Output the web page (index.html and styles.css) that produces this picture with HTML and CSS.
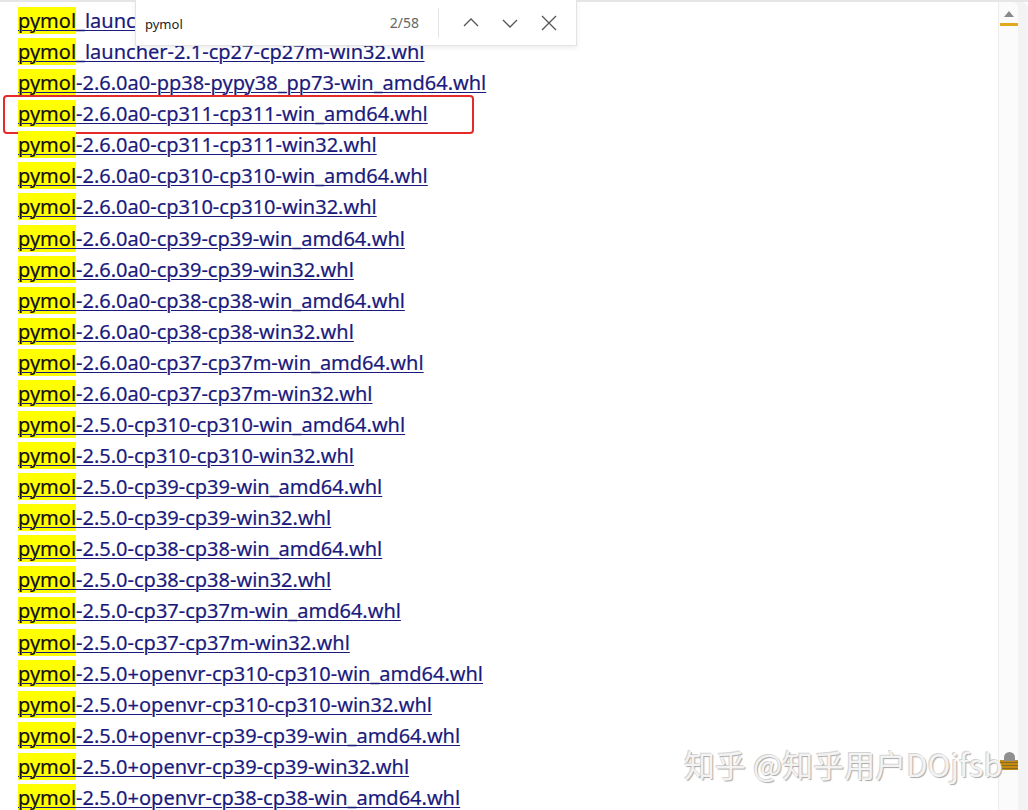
FILE: index.html
```html
<!DOCTYPE html>
<html>
<head>
<meta charset="utf-8">
<link rel="stylesheet" href="styles.css">
</head>
<body>
<div class="topline"></div>
<div class="page">
  <ul class="list">
    <li><a href="#"><mark>pymol</mark>_launcher-2.1-cp27-cp27m-win_amd64.whl</a></li>
    <li><a href="#"><mark>pymol</mark>_launcher-2.1-cp27-cp27m-win32.whl</a></li>
    <li><a href="#"><mark>pymol</mark>-2.6.0a0-pp38-pypy38_pp73-win_amd64.whl</a></li>
    <li class="boxed"><a href="#"><mark>pymol</mark>-2.6.0a0-cp311-cp311-win_amd64.whl</a></li>
    <li><a href="#"><mark>pymol</mark>-2.6.0a0-cp311-cp311-win32.whl</a></li>
    <li><a href="#"><mark>pymol</mark>-2.6.0a0-cp310-cp310-win_amd64.whl</a></li>
    <li><a href="#"><mark>pymol</mark>-2.6.0a0-cp310-cp310-win32.whl</a></li>
    <li><a href="#"><mark>pymol</mark>-2.6.0a0-cp39-cp39-win_amd64.whl</a></li>
    <li><a href="#"><mark>pymol</mark>-2.6.0a0-cp39-cp39-win32.whl</a></li>
    <li><a href="#"><mark>pymol</mark>-2.6.0a0-cp38-cp38-win_amd64.whl</a></li>
    <li><a href="#"><mark>pymol</mark>-2.6.0a0-cp38-cp38-win32.whl</a></li>
    <li><a href="#"><mark>pymol</mark>-2.6.0a0-cp37-cp37m-win_amd64.whl</a></li>
    <li><a href="#"><mark>pymol</mark>-2.6.0a0-cp37-cp37m-win32.whl</a></li>
    <li><a href="#"><mark>pymol</mark>-2.5.0-cp310-cp310-win_amd64.whl</a></li>
    <li><a href="#"><mark>pymol</mark>-2.5.0-cp310-cp310-win32.whl</a></li>
    <li><a href="#"><mark>pymol</mark>-2.5.0-cp39-cp39-win_amd64.whl</a></li>
    <li><a href="#"><mark>pymol</mark>-2.5.0-cp39-cp39-win32.whl</a></li>
    <li><a href="#"><mark>pymol</mark>-2.5.0-cp38-cp38-win_amd64.whl</a></li>
    <li><a href="#"><mark>pymol</mark>-2.5.0-cp38-cp38-win32.whl</a></li>
    <li><a href="#"><mark>pymol</mark>-2.5.0-cp37-cp37m-win_amd64.whl</a></li>
    <li><a href="#"><mark>pymol</mark>-2.5.0-cp37-cp37m-win32.whl</a></li>
    <li><a href="#"><mark>pymol</mark>-2.5.0+openvr-cp310-cp310-win_amd64.whl</a></li>
    <li><a href="#"><mark>pymol</mark>-2.5.0+openvr-cp310-cp310-win32.whl</a></li>
    <li><a href="#"><mark>pymol</mark>-2.5.0+openvr-cp39-cp39-win_amd64.whl</a></li>
    <li><a href="#"><mark>pymol</mark>-2.5.0+openvr-cp39-cp39-win32.whl</a></li>
    <li><a href="#"><mark>pymol</mark>-2.5.0+openvr-cp38-cp38-win_amd64.whl</a></li>
  </ul>
  <div class="scrollbar">
    <svg class="arrow" width="12" height="8" viewBox="0 0 12 8"><path d="M6 1 L11 7 L1 7 Z" fill="#8a8a8a"/></svg>
    <div class="mark-top"></div>
    <div class="mark-bottom"></div>
    <div class="thumb"></div>
  </div>
</div>

<div class="findbar">
  <span class="query">pymol</span>
  <span class="count">2/58</span>
  <span class="sep"></span>
  <svg class="btn" width="20" height="20" viewBox="0 0 20 20"><path d="M3 13 L10 6 L17 13" fill="none" stroke="#555" stroke-width="1.3"/></svg>
  <svg class="btn" width="20" height="20" viewBox="0 0 20 20"><path d="M3 7 L10 14 L17 7" fill="none" stroke="#555" stroke-width="1.3"/></svg>
  <svg class="btn" width="20" height="20" viewBox="0 0 20 20"><path d="M3 3 L17 17 M17 3 L3 17" fill="none" stroke="#555" stroke-width="1.3"/></svg>
</div>

<div class="watermark">知乎 @知乎用户DOjfsb</div>
</body>
</html>
```

FILE: styles.css
```css
html, body {
  margin: 0;
  padding: 0;
  background: #ffffff;
  overflow: hidden;
  height: 810px;
}
body {
  font-family: "Noto Sans", "Noto Sans CJK SC", sans-serif;
  position: relative;
}
.topline {
  height: 2px;
  background: #e6e6e6;
}
.page {
  display: flex;
  height: 808px;
}
.list {
  list-style: none;
  margin: 0;
  padding: 6px 0 0 18px;
  flex: 1;
}
.list li {
  height: 31.08px;
  font-size: 20px;
  line-height: 26px;
  position: relative;
}
.list a {
  color: #1a1a7c;
  text-decoration: underline;
  text-underline-offset: 2px;
  text-decoration-thickness: 1px;
  white-space: nowrap;
  -webkit-text-stroke: 0.2px #1a1a7c;
}
.list mark {
  background: #ffff00;
  color: #111;
  padding: 0;
  -webkit-text-stroke: 0.2px #111;
}
.list li.boxed::before {
  content: "";
  position: absolute;
  left: -15px;
  top: -6px;
  width: 467px;
  height: 35px;
  border: 2px solid #e52a2a;
  border-radius: 4px;
}
.scrollbar {
  width: 19px;
  margin-right: 10px;
  background: #fbfbfb;
  border-left: 1px solid #ececec;
  border-top-right-radius: 6px;
  position: relative;
  box-shadow: 10px 0 0 #f3f3f3;
}
.scrollbar .arrow {
  position: absolute;
  left: 4px;
  top: 8px;
}
.mark-top {
  position: absolute;
  left: 1px;
  right: 0;
  top: 21px;
  height: 3px;
  background: #e2a81e;
}
.mark-bottom {
  position: absolute;
  left: 1px;
  right: 0;
  top: 758px;
  height: 10px;
  background: repeating-linear-gradient(#c58a10 0 2px, #8a6a20 2px 3px);
}
.thumb {
  position: absolute;
  left: 5px;
  top: 750px;
  width: 11px;
  height: 9px;
  border-radius: 6px 6px 0 0;
  background: #8f8f8f;
}
.findbar {
  position: absolute;
  left: 135px;
  top: 0;
  width: 442px;
  height: 46px;
  background: #fff;
  border: 1px solid #e3e3e3;
  border-top: none;
  box-shadow: 0 2px 5px rgba(0,0,0,0.08);
  display: flex;
  align-items: center;
  box-sizing: border-box;
  padding: 0 17px 0 9px;
  font-family: "Noto Sans", sans-serif;
  font-size: 13px;
  color: #222;
}
.findbar .query {
  flex: 1;
  padding-top: 2px;
}
.findbar .count {
  color: #666;
  font-size: 14px;
  margin-right: 19px;
}
.findbar .sep {
  width: 1px;
  height: 30px;
  background: #e5e5e5;
  margin-right: 22px;
}
.findbar .btn {
  margin-left: 19px;
}
.findbar .sep + .btn {
  margin-left: 0;
}
.watermark {
  position: absolute;
  left: 684px;
  top: 741px;
  font-family: "Noto Sans CJK SC", sans-serif;
  font-size: 31px;
  color: #f3f3f3;
  letter-spacing: 0px;
  text-shadow: 1px 1px 1px #a8a8a8, -1px -1px 0 #d4d4d4;
  white-space: nowrap;
}
```
